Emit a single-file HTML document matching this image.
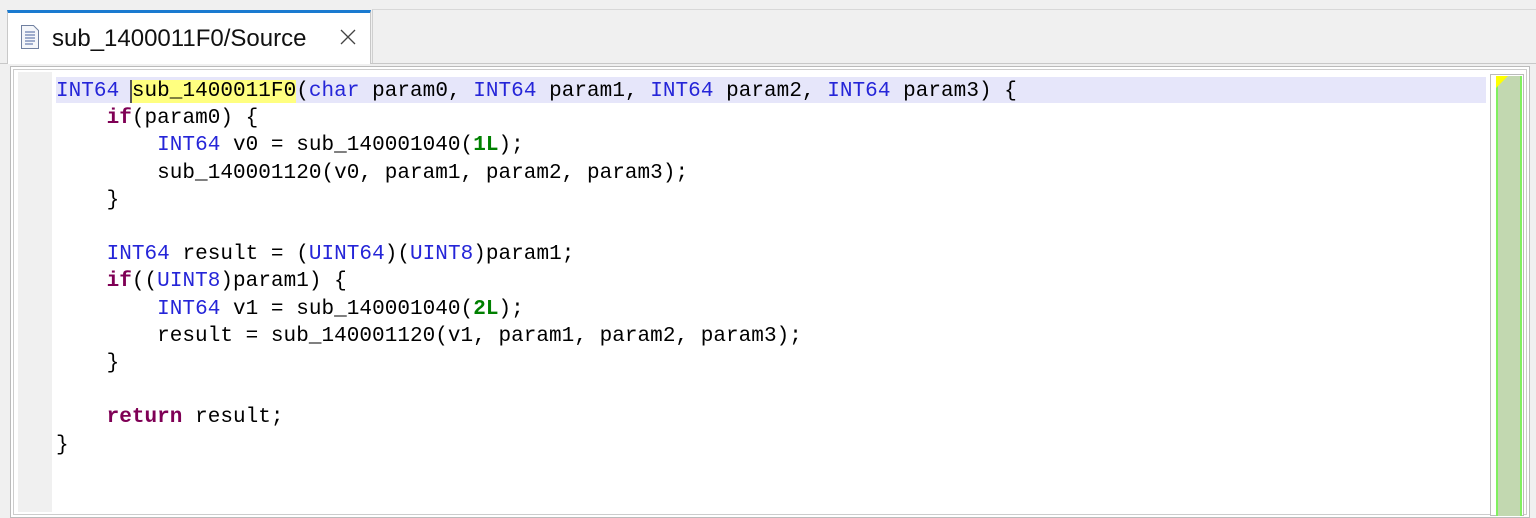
<!DOCTYPE html>
<html><head><style>
body{margin:0;width:1536px;height:504px;background:#f0f0f0;position:relative;overflow:hidden;font-family:"Liberation Sans",sans-serif}
.tabbar{position:absolute;left:0;top:0;width:1536px;height:63px;background:#f0f0f0;border-bottom:1px solid #c8c8c8}
.tabbar2{position:absolute;left:372px;top:9px;width:1164px;height:53px;border-top:1px solid #d8d8d8;border-left:1px solid #d0d0d0;background:#f0f0f0}
.tab{position:absolute;left:7px;top:10px;width:364px;height:54px;background:#fff;border:1px solid #c8c8c8;border-bottom:none;border-top:3px solid #1a7ad0;box-sizing:border-box}
.tab .t{position:absolute;left:44px;top:12px;font-size:24px;color:#111}
.panel{position:absolute;left:10px;top:66px;width:1518px;height:450px;background:#fff;border:1px solid #bbb;box-shadow:inset 0 0 0 2px #fff,inset 0 0 0 3px #ccc}
.gutter{position:absolute;left:18px;top:72px;width:34px;height:440px;background:#f0f0f0}
.hl{position:absolute;left:56px;top:77px;width:1430px;height:26px;background:#e6e6fa}
.code{position:absolute;left:56px;top:78px;font-family:"Liberation Mono",monospace;font-size:21px;letter-spacing:0.04px;line-height:27.2px;white-space:pre;color:#000}
.k{color:#2525d8}.r{color:#7f0055;font-weight:bold}.n{color:#008000;font-weight:bold}
.y{background:#ffff80;border-left:2px solid #555;margin-left:-2px}
.ruler{position:absolute;left:1490px;top:74px;width:32px;height:440px;background:#fff;border:1px solid #bbb}
.rfill{position:absolute;left:1496px;top:76px;width:22px;height:440px;background:#c2d8b0;border-left:2px solid #80f060;border-right:2px solid #80f060}
.tri{position:absolute;left:1496px;top:76px;width:0;height:0;border-top:12px solid #ff0;border-right:12px solid transparent}
</style></head><body>
<div class="tabbar"></div><div class="tabbar2"></div>
<div class="tab">
<svg style="position:absolute;left:12px;top:11px" width="20" height="26" viewBox="0 0 20 26"><path d="M1.5 1.5h12l5 5v18h-17z" fill="#f4f6fa" stroke="#7080a0"/><path d="M5 8h10M5 11h10M5 14h10M5 17h10M5 20h8" stroke="#6a80b0" stroke-width="1.2"/></svg>
<span class="t">sub_1400011F0/Source</span>
<svg style="position:absolute;left:332px;top:16px" width="16" height="16" viewBox="0 0 16 16"><path d="M1 1L15 15M15 1L1 15" stroke="#444" stroke-width="1.3"/></svg></div>
<div class="panel"></div>
<div class="gutter"></div>
<div class="hl"></div>
<div class="code"><span class="k">INT64</span> <span class="y">sub_1400011F0</span>(<span class="k">char</span> param0, <span class="k">INT64</span> param1, <span class="k">INT64</span> param2, <span class="k">INT64</span> param3) {
    <span class="r">if</span>(param0) {
        <span class="k">INT64</span> v0 = sub_140001040(<span class="n">1L</span>);
        sub_140001120(v0, param1, param2, param3);
    }

    <span class="k">INT64</span> result = (<span class="k">UINT64</span>)(<span class="k">UINT8</span>)param1;
    <span class="r">if</span>((<span class="k">UINT8</span>)param1) {
        <span class="k">INT64</span> v1 = sub_140001040(<span class="n">2L</span>);
        result = sub_140001120(v1, param1, param2, param3);
    }

    <span class="r">return</span> result;
}</div>
<div class="ruler"></div><div class="rfill"></div><div class="tri"></div>
</body></html>
